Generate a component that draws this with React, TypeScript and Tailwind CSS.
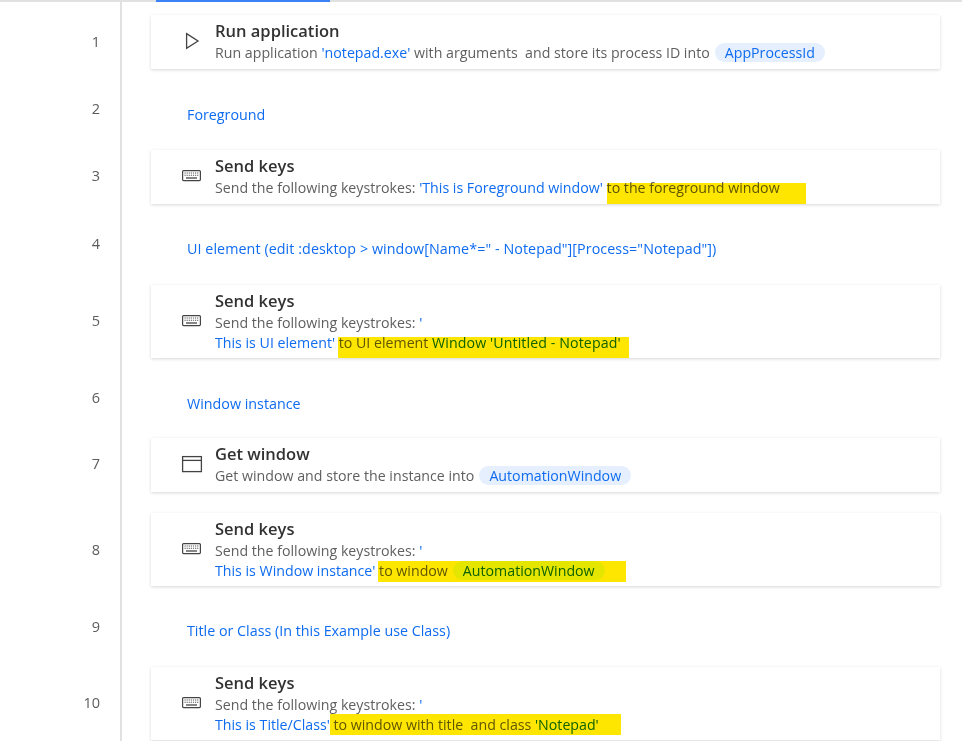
const font = { fontFamily: '"Open Sans", "Noto Sans", sans-serif' };

function PlayIcon() {
  return (
    <svg width="22" height="22" viewBox="0 0 22 22" fill="none" stroke="#444" strokeWidth="1.3">
      <path d="M5.6 3.6 L17 11 L5.6 18.4 Z" />
    </svg>
  );
}

function KeyboardIcon() {
  return (
    <svg width="22" height="22" viewBox="0 0 22 22" fill="none">
      <rect x="1.6" y="5.6" width="17.8" height="10" rx="1" stroke="#444" strokeWidth="1.2" />
      <path d="M3.5 8h14M3.5 10.2h14" stroke="#555" strokeWidth="1.1" strokeDasharray="1.2 0.9" />
      <path d="M5 13h11" stroke="#444" strokeWidth="1.3" />
    </svg>
  );
}

function WindowIcon() {
  return (
    <svg width="22" height="22" viewBox="0 0 22 22" fill="none" stroke="#444" strokeWidth="1.3">
      <rect x="1.6" y="3.6" width="18.8" height="15" />
      <path d="M1.6 7.4h18.8" />
    </svg>
  );
}

function Blue({ children }: { children: React.ReactNode }) {
  return <span className="text-[#0f6cf0]">{children}</span>;
}

function Pill({ children, marked }: { children: React.ReactNode; marked?: boolean }) {
  return (
    <span
      className={
        marked
          ? "ml-[5px] inline-block rounded-full bg-[#e5ffff] px-[10px] leading-[19px] text-[#0f6cf0]"
          : "ml-[5px] inline-block rounded-full bg-[#e5effd] px-[10px] leading-[19px] text-[#0f6cf0]"
      }
    >
      {children}
    </span>
  );
}

function Row({ n, height, top, children }: { n: number; height: number; top: number; children: React.ReactNode }) {
  return (
    <div className="flex" style={{ height }}>
      <div className="flex w-[122px] shrink-0 items-center justify-end border-r-2 border-[#e1e1e1] pr-[20px] pt-[2px] text-[14.5px] text-[#5c5c5c]">
        {n}
      </div>
      <div className="flex-1 pl-[29px] pr-[22px]" style={{ paddingTop: top }}>
        {children}
      </div>
    </div>
  );
}

function Card({ icon, title, children }: { icon: React.ReactNode; title: string; children: React.ReactNode }) {
  return (
    <div className="relative flex items-center bg-white pb-[6px] pl-[30px] pt-[4px] shadow-[0_1px_3px_rgba(0,0,0,0.16)]">
      <div className="mr-[12px] w-[22px] shrink-0">{icon}</div>
      <div className="min-w-0 flex-1">
        <div className="text-[16.5px] font-semibold leading-[24px] text-[#323232]">{title}</div>
        <div className="text-[14.2px] leading-[19.5px] text-[#5f5f5f]">{children}</div>
      </div>
    </div>
  );
}

function Comment({ children }: { children: React.ReactNode }) {
  return <div className="pl-[36px] text-[14.3px] leading-[20px] text-[#0f6cf0]">{children}</div>;
}

// marker strokes drawn over the finished flow, multiply keeps the text readable
function Marker({ left, width, bottom, height = 21 }: { left: number; width: number; bottom: number; height?: number }) {
  return (
    <div
      className="absolute bg-[#ffe600] mix-blend-multiply"
      style={{ left: left - 151, width, bottom, height }}
    />
  );
}

export default function App() {
  return (
    <div className="h-[741px] w-[962px] overflow-hidden bg-white" style={font}>
      <div className="relative h-[2px] bg-[#e1e1e1]">
        <div className="absolute left-[156px] top-0 h-[2px] w-[174px] bg-[#3b82f6]" />
      </div>
      <Row n={1} height={78} top={13}>
        <Card icon={<PlayIcon />} title="Run application">
          Run application <Blue>'notepad.exe'</Blue> with arguments&nbsp; and store its process ID into
          <Pill>AppProcessId</Pill>
        </Card>
      </Row>
      <Row n={2} height={56} top={25}>
        <Comment>Foreground</Comment>
      </Row>
      <Row n={3} height={78} top={14}>
        <Card icon={<KeyboardIcon />} title="Send keys">
          Send the following keystrokes: <Blue>'This is Foreground window'</Blue> to the foreground window
          <Marker left={607} width={199} bottom={0} />
        </Card>
      </Row>
      <Row n={4} height={58} top={25}>
        <Comment>
          <span className="tracking-[0.07px]">UI element (edit :desktop &gt; window[Name*=" - Notepad"][Process="Notepad"])</span>
        </Comment>
      </Row>
      <Row n={5} height={96} top={13}>
        <Card icon={<KeyboardIcon />} title="Send keys">
          Send the following keystrokes: <Blue>'</Blue>
          <br />
          <Blue>This is UI element'</Blue> to UI element{" "}
          <span className="tracking-[0.1px]">
            <Blue>Window 'Untitled - Notepad'</Blue>
          </span>
          <Marker left={338} width={291} bottom={0} />
        </Card>
      </Row>
      <Row n={6} height={58} top={26}>
        <Comment>Window instance</Comment>
      </Row>
      <Row n={7} height={74} top={12}>
        <Card icon={<WindowIcon />} title="Get window">
          Get window and store the instance into
          <Pill>AutomationWindow</Pill>
        </Card>
      </Row>
      <Row n={8} height={98} top={13}>
        <Card icon={<KeyboardIcon />} title="Send keys">
          Send the following keystrokes: <Blue>'</Blue>
          <br />
          <Blue>This is Window instance'</Blue> to window
          <Pill marked>AutomationWindow</Pill>
          <Marker left={378} width={248} bottom={4} />
        </Card>
      </Row>
      <Row n={9} height={56} top={23}>
        <Comment>Title or Class (In this Example use Class)</Comment>
      </Row>
      <Row n={10} height={96} top={13}>
        <Card icon={<KeyboardIcon />} title="Send keys">
          Send the following keystrokes: <Blue>'</Blue>
          <br />
          <Blue>This is Title/Class'</Blue> to window with title&nbsp; and class <Blue>'Notepad'</Blue>
          <Marker left={330} width={291} bottom={5} />
        </Card>
      </Row>
    </div>
  );
}
